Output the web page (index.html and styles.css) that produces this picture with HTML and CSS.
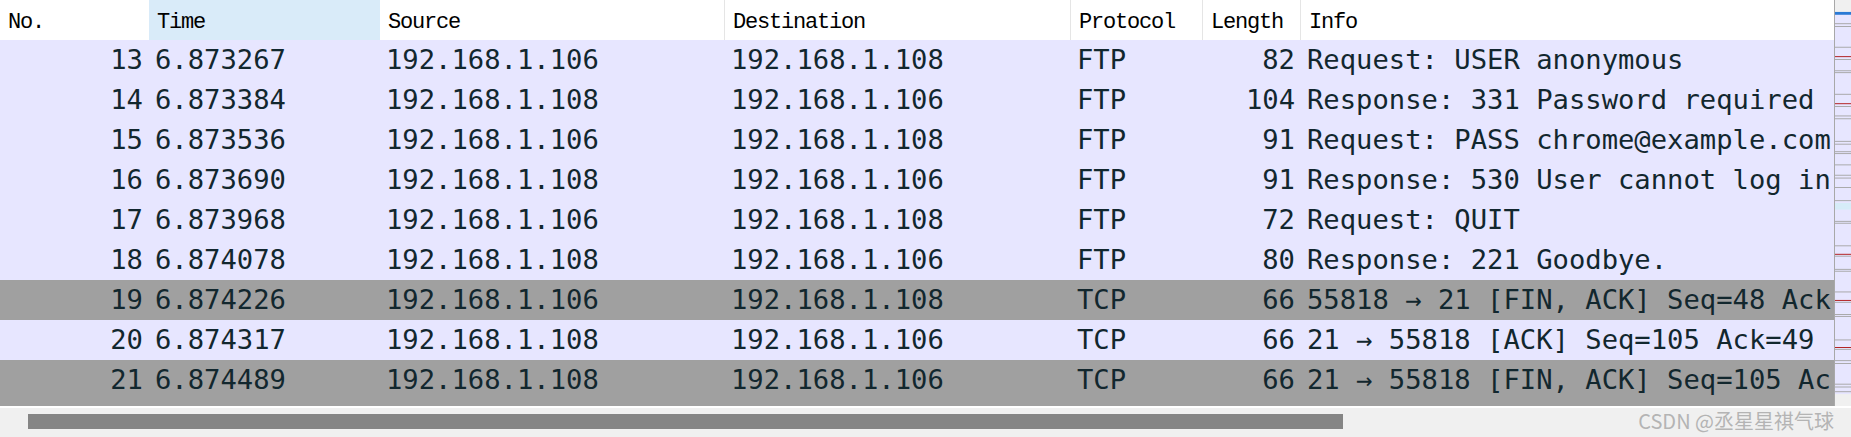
FILE: index.html
```html
<!DOCTYPE html>
<html lang="en">
<head>
<meta charset="utf-8">
<title>Packet list</title>
<link rel="stylesheet" href="styles.css">
</head>
<body>
<div class="app">
  <div class="main">
    <div class="table">
      <div class="header">
        <div class="hcell">No.</div>
        <div class="hcell sorted">Time</div>
        <div class="hcell sep">Source</div>
        <div class="hcell sep">Destination</div>
        <div class="hcell sep">Protocol</div>
        <div class="hcell sep">Length</div>
        <div class="hcell">Info</div>
      </div>
      <div class="rows">
        <div class="row tcp"><div class="cell num">13</div><div class="cell">6.873267</div><div class="cell">192.168.1.106</div><div class="cell">192.168.1.108</div><div class="cell">FTP</div><div class="cell num">82</div><div class="cell">Request: USER anonymous</div></div>
        <div class="row tcp"><div class="cell num">14</div><div class="cell">6.873384</div><div class="cell">192.168.1.108</div><div class="cell">192.168.1.106</div><div class="cell">FTP</div><div class="cell num">104</div><div class="cell">Response: 331 Password required</div></div>
        <div class="row tcp"><div class="cell num">15</div><div class="cell">6.873536</div><div class="cell">192.168.1.106</div><div class="cell">192.168.1.108</div><div class="cell">FTP</div><div class="cell num">91</div><div class="cell">Request: PASS chrome@example.com</div></div>
        <div class="row tcp"><div class="cell num">16</div><div class="cell">6.873690</div><div class="cell">192.168.1.108</div><div class="cell">192.168.1.106</div><div class="cell">FTP</div><div class="cell num">91</div><div class="cell">Response: 530 User cannot log in</div></div>
        <div class="row tcp"><div class="cell num">17</div><div class="cell">6.873968</div><div class="cell">192.168.1.106</div><div class="cell">192.168.1.108</div><div class="cell">FTP</div><div class="cell num">72</div><div class="cell">Request: QUIT</div></div>
        <div class="row tcp"><div class="cell num">18</div><div class="cell">6.874078</div><div class="cell">192.168.1.108</div><div class="cell">192.168.1.106</div><div class="cell">FTP</div><div class="cell num">80</div><div class="cell">Response: 221 Goodbye.</div></div>
        <div class="row fin"><div class="cell num">19</div><div class="cell">6.874226</div><div class="cell">192.168.1.106</div><div class="cell">192.168.1.108</div><div class="cell">TCP</div><div class="cell num">66</div><div class="cell">55818 → 21 [FIN, ACK] Seq=48 Ack</div></div>
        <div class="row tcp"><div class="cell num">20</div><div class="cell">6.874317</div><div class="cell">192.168.1.108</div><div class="cell">192.168.1.106</div><div class="cell">TCP</div><div class="cell num">66</div><div class="cell">21 → 55818 [ACK] Seq=105 Ack=49</div></div>
        <div class="row fin tail"><div class="cell num">21</div><div class="cell">6.874489</div><div class="cell">192.168.1.108</div><div class="cell">192.168.1.106</div><div class="cell">TCP</div><div class="cell num">66</div><div class="cell">21 → 55818 [FIN, ACK] Seq=105 Ac</div></div>
      </div>
    </div>
    <div class="minimap">
      <svg width="17" height="406" viewBox="0 0 17 406" xmlns="http://www.w3.org/2000/svg">
        <rect x="0" y="0" width="17" height="406" fill="#e7e6ff"/>
        <rect x="0" y="0" width="17" height="3" fill="#2a7ad5"/>
        <g fill="#a6a6a6">
          <rect x="0" y="12" width="17" height="1"/>
          <rect x="0" y="15" width="17" height="1"/>
          <rect x="0" y="37" width="17" height="1"/>
          <rect x="0" y="50" width="17" height="1"/>
          <rect x="0" y="62" width="17" height="1"/>
          <rect x="0" y="64" width="17" height="1"/>
          <rect x="0" y="87" width="17" height="1"/>
          <rect x="0" y="100" width="17" height="1"/>
          <rect x="0" y="110" width="17" height="1"/>
          <rect x="0" y="113" width="17" height="1"/>
          <rect x="0" y="137" width="17" height="1"/>
          <rect x="0" y="140" width="17" height="1"/>
          <rect x="0" y="148" width="17" height="1"/>
          <rect x="0" y="150" width="17" height="1"/>
          <rect x="0" y="162" width="17" height="1"/>
          <rect x="0" y="173" width="17" height="1"/>
          <rect x="0" y="176" width="17" height="1"/>
          <rect x="0" y="186" width="17" height="1"/>
          <rect x="0" y="200" width="17" height="1"/>
          <rect x="0" y="222" width="17" height="1"/>
          <rect x="0" y="224" width="17" height="1"/>
          <rect x="0" y="248" width="17" height="1"/>
          <rect x="0" y="259" width="17" height="1"/>
          <rect x="0" y="273" width="17" height="1"/>
          <rect x="0" y="275" width="17" height="1"/>
          <rect x="0" y="297" width="17" height="1"/>
          <rect x="0" y="308" width="17" height="1"/>
          <rect x="0" y="321" width="17" height="1"/>
          <rect x="0" y="323" width="17" height="1"/>
          <rect x="0" y="348" width="17" height="1"/>
          <rect x="0" y="358" width="17" height="1"/>
          <rect x="0" y="370" width="17" height="1"/>
          <rect x="0" y="373" width="17" height="1"/>
          <rect x="0" y="395" width="17" height="1"/>
          <rect x="0" y="398" width="17" height="1"/>
          <rect x="0" y="403" width="17" height="1"/>
        </g>
        <rect x="0" y="203" width="17" height="7" fill="#d6ecf8"/>
        <g fill="#b01818">
          <rect x="0" y="47" width="17" height="1"/>
          <rect x="0" y="97" width="17" height="1"/>
          <rect x="0" y="257" width="17" height="1"/>
          <rect x="0" y="306" width="17" height="1"/>
          <rect x="0" y="356" width="17" height="1"/>
        </g>
      </svg>
    </div>
  </div>
  <div class="hscroll">
    <div class="thumb"></div>
    <div class="watermark">CSDN @丞星星祺气球</div>
  </div>
</div>
</body>
</html>
```

FILE: styles.css
```css
html, body {
  margin: 0;
  padding: 0;
  background: #f0f0f0;
}

.app {
  width: 1851px;
  height: 437px;
  display: flex;
  flex-direction: column;
  overflow: hidden;
}

.main {
  display: flex;
  height: 406px;
}

.table {
  width: 1834px;
  display: flex;
  flex-direction: column;
  overflow: hidden;
}

.header,
.row {
  display: grid;
  grid-template-columns: 149px 231px 345px 346px 132px 98px 533px;
}

.header {
  height: 40px;
  background: #ffffff;
}

.hcell {
  box-sizing: border-box;
  height: 40px;
  padding: 6px 0 0 8px;
  font-family: "Liberation Mono", monospace;
  font-size: 22px;
  letter-spacing: -1.2px;
  line-height: 34px;
  color: #000000;
  white-space: nowrap;
  overflow: hidden;
}

.hcell.sorted {
  background: #d9ebf9;
}

.hcell.sep {
  border-right: 1px solid #e5e5e5;
}

.rows {
  display: flex;
  flex-direction: column;
}

.row {
  height: 40px;
  color: #12272e;
  font-family: "DejaVu Sans Mono", monospace;
  font-size: 27.2px;
  line-height: 39px;
}

.row.tail {
  height: 46px;
}

.row.tcp {
  background: #e7e6ff;
}

.row.fin {
  background: #a0a0a0;
}

.cell {
  padding: 0 6px;
  white-space: nowrap;
  overflow: hidden;
}

.cell.num {
  text-align: right;
}

.minimap {
  width: 17px;
  height: 406px;
  box-sizing: border-box;
  border-left: 1px solid #a8a8a8;
  overflow: hidden;
  display: flex;
}

.minimap svg {
  display: block;
}

.hscroll {
  position: relative;
  height: 31px;
  box-sizing: border-box;
  border-top: 2px solid #ffffff;
  padding: 6px 0 0 28px;
  background: #f0f0f0;
}

.thumb {
  width: 1315px;
  height: 15px;
  background: #858585;
}

.watermark {
  position: absolute;
  right: 17px;
  top: 0;
  font-family: "Noto Sans CJK SC", sans-serif;
  font-size: 20px;
  line-height: 26px;
  color: #b4b4b4;
  white-space: nowrap;
}
```
